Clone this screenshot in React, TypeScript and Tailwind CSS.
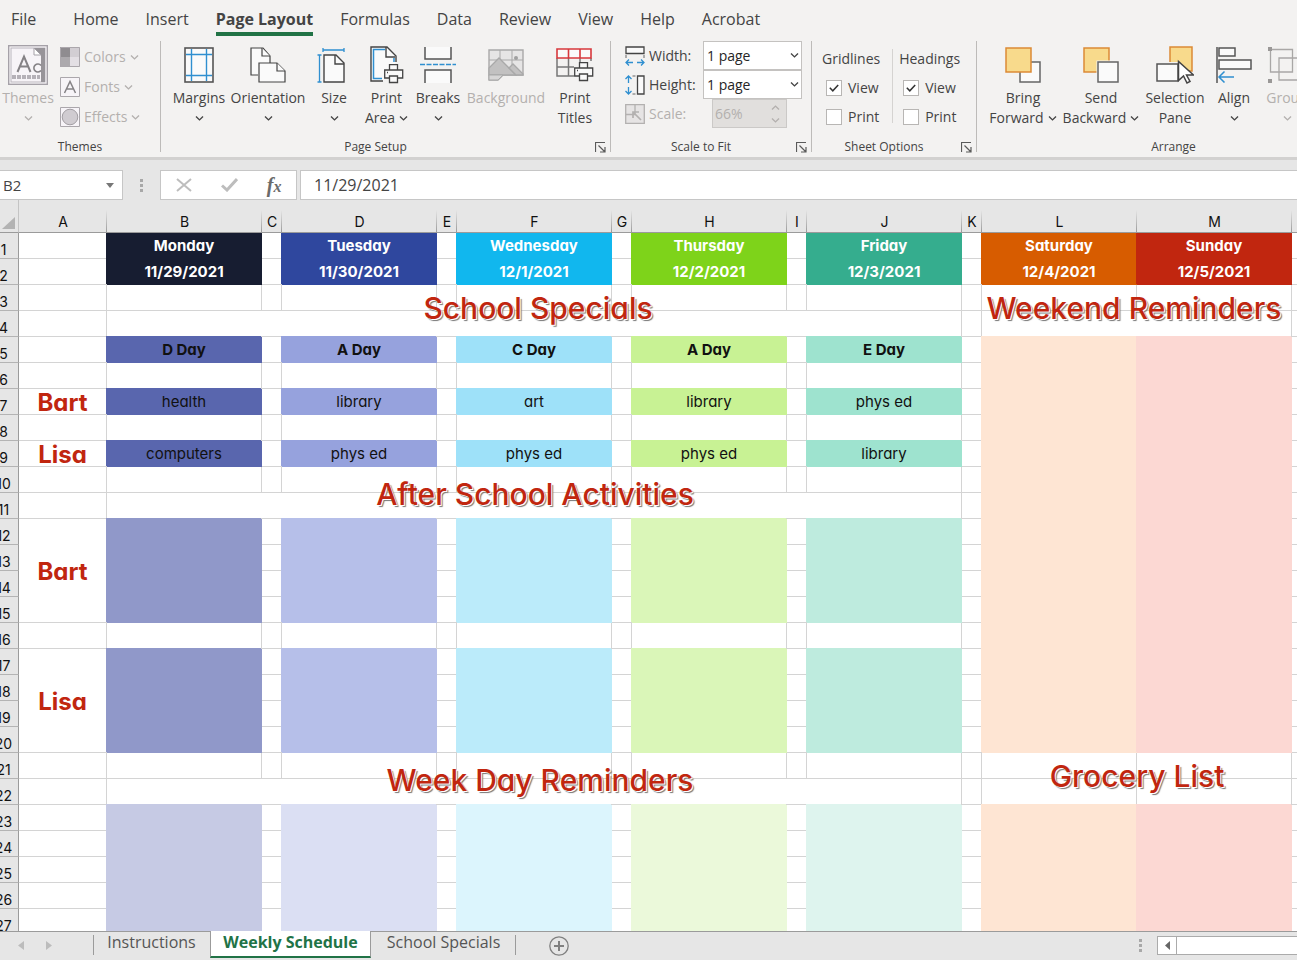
import { Fragment, type ReactNode } from "react";
import clsx from "clsx";

const Chevron = ({ up = false }: { up?: boolean }) => (
  <svg
    className={clsx("h-[5px] w-[9px] shrink-0", up && "rotate-180")}
    viewBox="0 0 9 5"
    fill="none"
    stroke="currentColor"
    strokeWidth="1.4"
  >
    <path d="M1 .6l3.5 3.3L8 .6" />
  </svg>
);

const Launcher = ({ label }: { label: string }) => (
  <button aria-label={label} className="flex w-5 justify-center">
    <svg className="h-[11px] w-[11px]" viewBox="0 0 11 11" fill="none" stroke="#5a5a5a">
      <path d="M.5 10V.5H10M3.5 3.5l6 6M10 5v5H5" strokeWidth="1.2" />
    </svg>
  </button>
);

/* ---------- ribbon icons ---------- */

const ThemesIcon = () => (
  <svg width="40" height="40" viewBox="0 0 40 40" fill="none">
    <rect x=".7" y=".7" width="38.6" height="38.6" fill="#fbf9fb" stroke="#a5a1a8" strokeWidth="1.4" />
    <rect x="3" y="3" width="34" height="34" fill="#f7f4f8" stroke="#bab6bd" />
    <path d="M33 3h4v34h-4z" fill="#979499" />
    <path d="M26 3h8v8z" fill="#979499" />
    <path d="M26 3v7h7z" fill="#fff" stroke="#a5a1a8" />
    <path d="M9.500 27L16 11.500 22.500 27M12 21.500h8.500" stroke="#858286" strokeWidth="2" />
    <path d="M33 20.500a4 4 0 1 0 0 5" stroke="#858286" strokeWidth="1.600" />
    <path d="M4 32h28" stroke="#b5b1b8" strokeWidth="4" strokeDasharray="4 1" />
  </svg>
);

const ColorsIcon = () => (
  <svg width="20" height="20" viewBox="0 0 20 20">
    <path fill="#8f8c90" d="M0 0h10v10H0z" />
    <path fill="#d2ced3" d="M10 0h10v10H10z" />
    <path fill="#aca9ad" d="M0 10h10v10H0z" />
    <path fill="#e3dfe4" d="M10 10h10v10H10z" />
    <path fill="none" stroke="#aba7ac" d="M.5.5h19v19H.5z" />
  </svg>
);

const FontsIcon = () => (
  <svg width="20" height="20" viewBox="0 0 20 20" fill="none">
    <path fill="#f7f4f8" stroke="#aba7ac" d="M.5.5h19v19H.5z" />
    <path d="M4.500 16L10 4.500 15.500 16M6.500 12h7" stroke="#858286" strokeWidth="1.500" />
  </svg>
);

const EffectsIcon = () => (
  <svg width="20" height="20" viewBox="0 0 20 20">
    <path fill="#f7f4f8" stroke="#aba7ac" d="M.5.5h19v19H.5z" />
    <circle cx="10" cy="10" r="7.800" fill="#d0ccd1" stroke="#a29ea3" />
  </svg>
);

const MarginsIcon = () => (
  <svg width="30" height="36" viewBox="0 0 30 36" fill="none">
    <rect x="1" y="1" width="28" height="34" fill="#fafafa" stroke="#555" strokeWidth="1.600" />
    <path d="M7.500 2v32M22.500 2v32M2 7.500h26M2 28.500h26" stroke="#2f8fd0" strokeWidth="1.400" />
  </svg>
);

const OrientationIcon = () => (
  <svg width="36" height="36" viewBox="0 0 36 36" fill="#fafafa" stroke="#444" strokeWidth="1.200">
    <path d="M8 28H1V1h12l7 8v7" />
    <path d="M12 1v8h8" />
    <path d="M9 16h18l8 8v11H9z" />
    <path d="M27 16v8h8" />
  </svg>
);

const SizeIcon = () => (
  <svg className="mr-1.5" width="28" height="36" viewBox="0 0 28 36" fill="none">
    <path d="M6 1v4M27 1v4M6 3h21M.5 8h4M.5 35h4M2.500 8v27" stroke="#2f8fd0" strokeWidth="1.300" />
    <path d="M7 8h12l8 8v19H7z" fill="#fafafa" stroke="#444" strokeWidth="1.400" />
    <path d="M18 8v9h9" stroke="#444" strokeWidth="1.400" />
  </svg>
);

const Printer = () => (
  <g fill="#fafafa" stroke="#444" strokeWidth="1.300">
    <path d="M5.500 6V.7h8V6" />
    <path d="M.7 6h18v8H.7z" />
    <path d="M5.500 12h8v6.500h-8z" />
    <path d="M3 8.500h1" />
  </g>
);

const PrintAreaIcon = () => (
  <svg width="34" height="38" viewBox="0 0 34 38" fill="none">
    <path d="M13 35H1V1h16l9 9v6" fill="#fafafa" stroke="#444" strokeWidth="1.400" />
    <path d="M16 1v10h9" stroke="#444" strokeWidth="1.400" />
    <path d="M12 32.500H3.500V3.500H15M24 12v4" stroke="#2f8fd0" strokeWidth="1.500" />
    <g transform="translate(14 18)">
      <Printer />
    </g>
  </svg>
);

const BreaksIcon = () => (
  <svg width="36" height="36" viewBox="0 0 36 36" fill="none">
    <path d="M5 0v12h26V0M5 36V23h26v13" fill="#fafafa" stroke="#555" strokeWidth="1.500" />
    <path d="M0 17.500h36" stroke="#2f8fd0" strokeWidth="1.500" strokeDasharray="5 1.500" />
  </svg>
);

const BackgroundIcon = () => (
  <svg width="36" height="32" viewBox="0 0 36 32" fill="none" stroke="#a9a9a9">
    <path d="M1 1h34v25H15l-5 5H1z" fill="#e6e5e5" strokeWidth="1.400" />
    <path d="M12 1v10M24 1v16M1 11h34" />
    <path d="M1 26v-7l10-10 17 17z" fill="#c2c1c1" strokeWidth="1.300" />
    <path d="M21 19l4-4 10 10v1h-7z" fill="#c2c1c1" strokeWidth="1.300" />
    <circle cx="28" cy="9" r="2" fill="#a0a0a0" stroke="none" />
    <path d="M1 31h9l5-5H1z" fill="#d7d6d6" />
  </svg>
);

const PrintTitlesIcon = () => (
  <svg width="38" height="34" viewBox="0 0 38 34" fill="none">
    <path d="M1 10v18h17M1 19h17M12.500 10v18M24 10v4M35 10v3" stroke="#777" strokeWidth="1.500" />
    <path d="M1 1h34v9H1zM12.500 1v9M24 1v9" fill="#fafafa" stroke="#d8383c" strokeWidth="1.600" />
    <g transform="translate(18 14)">
      <Printer />
    </g>
  </svg>
);

const WidthIcon = () => (
  <svg width="20" height="20" viewBox="0 0 20 20" fill="none">
    <path d="M1 1h18v6.500H1z" fill="#fafafa" stroke="#444" strokeWidth="1.300" />
    <path d="M1 9v3M19 9v3" stroke="#666" />
    <path d="M1 16.500h7M12 16.500h7M4 13.500l-3 3 3 3M16 13.500l3 3-3 3" stroke="#2f8fd0" strokeWidth="1.300" />
  </svg>
);

const HeightIcon = () => (
  <svg width="20" height="20" viewBox="0 0 20 20" fill="none">
    <path d="M12.500 1H19v18h-6.500z" fill="#fafafa" stroke="#444" strokeWidth="1.300" />
    <path d="M7.500 1h3M7.500 19h3" stroke="#666" />
    <path d="M3.500 1v7M3.500 12v7M.5 4l3-3 3 3M.5 16l3 3 3-3" stroke="#2f8fd0" strokeWidth="1.300" />
  </svg>
);

const ScaleIcon = () => (
  <svg width="20" height="20" viewBox="0 0 20 20" fill="none" stroke="#b3b1b0" strokeWidth="1.300">
    <path d="M.7.7h18.600v18.600H.7z" fill="#e6e4e4" />
    <path d="M.7 10.500H10V.7" />
    <path d="M16 16L8.500 8.500M8 14V8h6" strokeWidth="1.700" />
  </svg>
);

const ForwardIcon = () => (
  <svg width="36" height="36" viewBox="0 0 36 36" strokeWidth="1.500">
    <path d="M15 15h20v20H15z" fill="#fafafa" stroke="#666" />
    <path d="M1 1h25v24H1z" fill="#f8da8c" stroke="#dc8a36" />
  </svg>
);

const BackwardIcon = () => (
  <svg width="36" height="36" viewBox="0 0 36 36" strokeWidth="1.500">
    <path d="M1 1h25v24H1z" fill="#f8da8c" stroke="#dc8a36" />
    <path d="M13.500 13.500H36V36H13.500z" fill="#f3f2f1" />
    <path d="M15 15h20v20H15z" fill="#fafafa" stroke="#666" />
  </svg>
);

const SelectionIcon = () => (
  <svg width="38" height="38" viewBox="0 0 38 38" strokeWidth="1.500">
    <path d="M14 1h22v24H14z" fill="#f8da8c" stroke="#dc8a36" />
    <path d="M0 16h24v20H0z" fill="#f3f2f1" />
    <path d="M1 18h21v17H1z" fill="#fafafa" stroke="#555" />
    <path d="M22.500 15.500v19l5-4.500 3.500 7 3-1.500-3.500-6.500h7z" fill="#fff" stroke="#444" />
  </svg>
);

const AlignIcon = () => (
  <svg width="36" height="36" viewBox="0 0 36 36" fill="none" strokeWidth="1.500">
    <path d="M1 0v36" stroke="#555" />
    <path d="M3 1h16v8H3zM3 13h32v9H3z" fill="#fafafa" stroke="#555" />
    <path d="M3 30h15M8.500 24.500L3 30l5.500 5.500" stroke="#2f8fd0" />
  </svg>
);

const GroupIcon = () => (
  <svg width="38" height="36" viewBox="0 0 38 36" fill="none" stroke="#a9a7a6" strokeWidth="1.300">
    <path d="M2.500 4v21h22V2.500H4M11 11h25v22H11z" />
    <path d="M0 0h4v4H0zM0 32h4v4H0zM34 0h4v4h-4zM34 32h4v4h-4z" fill="#9a9897" stroke="none" />
  </svg>
);

/* ---------- ribbon pieces ---------- */

type BigButtonProps = {
  icon: ReactNode;
  lines: string[];
  width: string;
  menu?: boolean;
  disabled?: boolean;
};

const BigButton = ({ icon, lines, width, menu, disabled }: BigButtonProps) => (
  <button
    disabled={disabled}
    className={clsx(
      "flex shrink-0 flex-col items-center text-sm leading-5 whitespace-nowrap",
      width,
      disabled && "text-[#b3b0ae]"
    )}
  >
    <span className="flex h-[46px] items-center justify-center">{icon}</span>
    <span>{lines[0]}</span>
    <span className="flex h-5 items-center gap-1">
      {lines[1]}
      {menu && <Chevron />}
    </span>
  </button>
);

type GroupProps = { title: string; width: string; launcher?: boolean; children: ReactNode };

const RibbonGroup = ({ title, width, launcher, children }: GroupProps) => (
  <section
    aria-label={title}
    className={clsx("flex h-[111px] shrink-0 flex-col justify-between border-r border-[#bdbbb9]", width)}
  >
    <div className="flex">{children}</div>
    <div className="flex h-2.5 items-center text-xs">
      <span className="flex-1 text-center">{title}</span>
      {launcher && <Launcher label={`${title} settings`} />}
    </div>
  </section>
);

const MenuRow = ({ icon, label }: { icon: ReactNode; label: string }) => (
  <button disabled className="flex h-[30px] items-center gap-1 text-sm text-[#b3b0ae]">
    {icon}
    <span>{label}</span>
    <Chevron />
  </button>
);

const PageSelect = ({ icon, label }: { icon: ReactNode; label: string }) => (
  <label className="flex h-[29px] items-center">
    {icon}
    <span className="ml-1 w-[54px]">{label}:</span>
    <span className="grid h-full w-[99px] items-center">
      <select className="col-start-1 row-start-1 h-full w-full appearance-none border border-[#c4c2c0] bg-white pl-[3px] text-[#262626]">
        <option>1 page</option>
        <option>Automatic</option>
      </select>
      <span className="pointer-events-none col-start-1 row-start-1 mr-[3px] justify-self-end">
        <Chevron />
      </span>
    </span>
  </label>
);

const CheckOption = ({ label, checked }: { label: string; checked?: boolean }) => (
  <label className="flex h-[29px] items-center gap-1.5 pl-1">
    <span className="grid place-items-center">
      <input
        type="checkbox"
        defaultChecked={checked}
        className="peer col-start-1 row-start-1 h-4 w-4 appearance-none border border-[#b8b6b4] bg-white"
      />
      <svg
        className="pointer-events-none invisible col-start-1 row-start-1 h-2 w-2.5 peer-checked:visible"
        viewBox="0 0 10 8"
        fill="none"
        stroke="#333"
        strokeWidth="1.500"
      >
        <path d="M.8 3.800l3 3L9.200 1" />
      </svg>
    </span>
    {label}
  </label>
);

const CheckColumn = ({ title }: { title: string }) => (
  <fieldset className="flex flex-col">
    <legend className="h-8 pt-2 leading-5">{title}</legend>
    <CheckOption label="View" checked />
    <CheckOption label="Print" />
  </fieldset>
);

const ribbonTabs = ["Home", "Insert", "Page Layout", "Formulas", "Data", "Review", "View", "Help", "Acrobat"];

const Ribbon = () => (
  <header className="shrink-0 overflow-hidden border-b-3 border-[#d2d1d0] bg-[#f3f2f1] text-[#444]">
    <nav className="flex h-[41px] items-start gap-[27px] pt-1.5 pl-[11px] text-base whitespace-nowrap">
      <button className="mr-2.5 h-[26px]">File</button>
      {ribbonTabs.map((tab) => (
        <button
          key={tab}
          className={clsx(tab === "Page Layout" ? "h-[30px] border-b-4 border-[#217346] font-bold" : "h-[26px]")}
        >
          {tab}
        </button>
      ))}
    </nav>
    <div className="flex pb-[5px]">
      <RibbonGroup title="Themes" width="w-[161px]">
        <div className="flex pt-px">
          <BigButton icon={<ThemesIcon />} lines={["Themes"]} width="w-[56px]" menu disabled />
          <div className="ml-1 flex flex-col">
            <MenuRow icon={<ColorsIcon />} label="Colors" />
            <MenuRow icon={<FontsIcon />} label="Fonts" />
            <MenuRow icon={<EffectsIcon />} label="Effects" />
          </div>
        </div>
      </RibbonGroup>
      <RibbonGroup title="Page Setup" width="w-[450px]" launcher>
        <div className="flex pt-px pl-[7px]">
          <BigButton icon={<MarginsIcon />} lines={["Margins"]} width="w-[62px]" menu />
          <BigButton icon={<OrientationIcon />} lines={["Orientation"]} width="w-[76px]" menu />
          <BigButton icon={<SizeIcon />} lines={["Size"]} width="w-[56px]" menu />
          <BigButton icon={<PrintAreaIcon />} lines={["Print", "Area"]} width="w-[49px]" menu />
          <BigButton icon={<BreaksIcon />} lines={["Breaks"]} width="w-[54px]" menu />
          <BigButton icon={<BackgroundIcon />} lines={["Background"]} width="w-[82px]" disabled />
          <BigButton icon={<PrintTitlesIcon />} lines={["Print", "Titles"]} width="w-[56px]" />
        </div>
      </RibbonGroup>
      <RibbonGroup title="Scale to Fit" width="w-[201px]" launcher>
        <div className="ml-[14px] flex flex-col text-sm">
          <PageSelect icon={<WidthIcon />} label="Width" />
          <PageSelect icon={<HeightIcon />} label="Height" />
          <label className="flex h-[29px] items-center text-[#b3b0ae]">
            <ScaleIcon />
            <span className="ml-1 w-[63px]">Scale:</span>
            <span className="flex h-full w-[75px] items-center border border-[#cbc9c7] bg-[#e1dfdd] pr-1.5 pl-0.5">
              <input disabled defaultValue="66%" className="w-0 flex-1" />
              <span className="flex flex-col gap-2">
                <Chevron up />
                <Chevron />
              </span>
            </span>
          </label>
        </div>
      </RibbonGroup>
      <RibbonGroup title="Sheet Options" width="w-[165px]" launcher>
        <div className="flex pl-[10px] text-sm">
          <CheckColumn title="Gridlines" />
          <div className="mr-[6px] ml-[12px] mt-2 h-[74px] border-r border-[#d5d3d1]" />
          <CheckColumn title="Headings" />
        </div>
      </RibbonGroup>
      <RibbonGroup title="Arrange" width="w-[394px]">
        <div className="flex pt-px pl-[7px]">
          <BigButton icon={<ForwardIcon />} lines={["Bring", "Forward"]} width="w-[78px]" menu />
          <BigButton icon={<BackwardIcon />} lines={["Send", "Backward"]} width="w-[78px]" menu />
          <BigButton icon={<SelectionIcon />} lines={["Selection", "Pane"]} width="w-[70px]" />
          <BigButton icon={<AlignIcon />} lines={["Align"]} width="w-[48px]" menu />
          <BigButton icon={<GroupIcon />} lines={["Group"]} width="w-[58px]" menu disabled />
        </div>
      </RibbonGroup>
    </div>
  </header>
);

const Dots = () => (
  <span className="flex flex-col gap-0.5">
    <i className="h-[3px] w-[3px] bg-[#a8a8a8]" />
    <i className="h-[3px] w-[3px] bg-[#a8a8a8]" />
    <i className="h-[3px] w-[3px] bg-[#a8a8a8]" />
  </span>
);

const FormulaBar = () => (
  <div className="flex h-10 shrink-0 items-end text-base text-[#444]">
    <div className="flex h-[30px] w-[123px] items-center border border-l-0 border-[#c6c6c6] bg-white pr-2 pl-[3px]">
      <input aria-label="Name box" defaultValue="B2" className="w-0 flex-1 text-[15px]" />
      <svg width="8" height="5" viewBox="0 0 8 5" fill="#777">
        <path d="M0 0h8L4 5z" />
      </svg>
    </div>
    <div className="flex h-[30px] w-[37px] items-center justify-center">
      <Dots />
    </div>
    <div className="flex h-[30px] w-[137px] items-center justify-around border border-[#c6c6c6] bg-white">
      <button aria-label="Cancel">
        <svg width="16" height="14" viewBox="0 0 16 14" stroke="#bdbdbd" strokeWidth="2">
          <path d="M1 1l14 12M15 1L1 13" />
        </svg>
      </button>
      <button aria-label="Enter">
        <svg width="17" height="14" viewBox="0 0 17 14" fill="none" stroke="#bdbdbd" strokeWidth="3">
          <path d="M1 7.500l5 4.500L16 1" />
        </svg>
      </button>
      <button aria-label="Insert function" className="font-['Liberation_Serif',serif] text-xl font-bold text-[#6b6b6b] italic">
        f<span className="text-base">x</span>
      </button>
    </div>
    <input
      aria-label="Formula"
      defaultValue="11/29/2021"
      className="ml-[3px] h-[30px] min-w-0 flex-1 border border-r-0 border-[#c6c6c6] bg-white pl-[13px]"
    />
  </div>
);

/* ---------- worksheet ---------- */

type DayColumn = {
  col: string;
  day: string;
  date: string;
  cycle?: string;
  bart?: string;
  lisa?: string;
  head: string;
  special: string;
  activity: string;
  reminder: string;
};

const days: DayColumn[] = [
  {
    col: "B", day: "Monday", date: "11/29/2021", cycle: "D Day", bart: "health", lisa: "computers",
    head: "bg-[#171d31] shadow-[#171d31]",
    special: "bg-[#5966ae] shadow-[#5966ae]",
    activity: "bg-[#9098c9] shadow-[#9098c9]",
    reminder: "bg-[#c6cae4] shadow-[#c6cae4]",
  },
  {
    col: "D", day: "Tuesday", date: "11/30/2021", cycle: "A Day", bart: "library", lisa: "phys ed",
    head: "bg-[#2f479e] shadow-[#2f479e]",
    special: "bg-[#96a2dd] shadow-[#96a2dd]",
    activity: "bg-[#b6bfe9] shadow-[#b6bfe9]",
    reminder: "bg-[#dbdff3] shadow-[#dbdff3]",
  },
  {
    col: "F", day: "Wednesday", date: "12/1/2021", cycle: "C Day", bart: "art", lisa: "phys ed",
    head: "bg-[#11b7ee] shadow-[#11b7ee]",
    special: "bg-[#9ee1f9] shadow-[#9ee1f9]",
    activity: "bg-[#bbebfa] shadow-[#bbebfa]",
    reminder: "bg-[#dcf5fd] shadow-[#dcf5fd]",
  },
  {
    col: "H", day: "Thursday", date: "12/2/2021", cycle: "A Day", bart: "library", lisa: "phys ed",
    head: "bg-[#7ed31a] shadow-[#7ed31a]",
    special: "bg-[#c8f294] shadow-[#c8f294]",
    activity: "bg-[#daf6b8] shadow-[#daf6b8]",
    reminder: "bg-[#ebf9da] shadow-[#ebf9da]",
  },
  {
    col: "J", day: "Friday", date: "12/3/2021", cycle: "E Day", bart: "phys ed", lisa: "library",
    head: "bg-[#35ad8e] shadow-[#35ad8e]",
    special: "bg-[#9ee3cf] shadow-[#9ee3cf]",
    activity: "bg-[#beebde] shadow-[#beebde]",
    reminder: "bg-[#def4ee] shadow-[#def4ee]",
  },
  {
    col: "L", day: "Saturday", date: "12/4/2021",
    head: "bg-[#d75c00] shadow-[#d75c00]",
    special: "bg-[#fee5d3] shadow-[#fee5d3]",
    activity: "bg-[#fee5d3] shadow-[#fee5d3]",
    reminder: "bg-[#fee5d3] shadow-[#fee5d3]",
  },
  {
    col: "M", day: "Sunday", date: "12/5/2021",
    head: "bg-[#c1260f] shadow-[#c1260f]",
    special: "bg-[#fcd8d3] shadow-[#fcd8d3]",
    activity: "bg-[#fcd8d3] shadow-[#fcd8d3]",
    reminder: "bg-[#fcd8d3] shadow-[#fcd8d3]",
  },
];

const columns = "ABCDEFGHIJKLM".split("");
const rows = Array.from({ length: 27 }, (_, i) => i + 1);
const names: Record<number, { name: string; span: number }> = {
  7: { name: "Bart", span: 1 },
  9: { name: "Lisa", span: 1 },
  12: { name: "Bart", span: 4 },
  17: { name: "Lisa", span: 4 },
};

const fillFor = (d: DayColumn, row: number) => {
  const weekend = !d.cycle;
  if (row <= 2) return d.head;
  if (row >= 23) return d.reminder;
  if (weekend) return row >= 5 && row <= 20 ? d.activity : undefined;
  if (row === 5 || row === 7 || row === 9) return d.special;
  if ((row >= 12 && row <= 15) || (row >= 17 && row <= 20)) return d.activity;
  return undefined;
};

const textFor = (d: DayColumn, row: number) => {
  switch (row) {
    case 1: return d.day;
    case 2: return d.date;
    case 5: return d.cycle;
    case 7: return d.bart;
    case 9: return d.lisa;
    default: return undefined;
  }
};

const cell = "h-[26px] border-r border-b p-0 text-center leading-5 whitespace-nowrap";
const grid = "border-[#d4d4d4]";

const NameCell = ({ row }: { row: number }) => {
  if ((row > 12 && row <= 15) || (row > 17 && row <= 20)) return null;
  const entry = names[row];
  return (
    <td rowSpan={entry?.span} className={clsx(cell, grid)}>
      {entry && <div className="pt-[3px] text-2xl leading-5 font-bold text-[#c1260f]">{entry.name}</div>}
    </td>
  );
};

const SheetRow = ({ row }: { row: number }) => {
  const mergedWeek = row === 4 || row === 11 || row === 22;
  return (
    <tr>
      <th className="h-[26px] border-r border-b border-r-[#9b9b9b] border-b-[#b4b4b4] bg-[#e6e6e6] p-0 align-bottom text-sm leading-4 font-normal">
        {row}
      </th>
      <NameCell row={row} />
      {columns.slice(1).map((col) => {
        if (mergedWeek && col > "B" && col < "K") return null;
        if (mergedWeek && col === "B") return <td key={col} colSpan={9} className={clsx(cell, grid)} />;
        if (row === 4 && col === "L") return <td key={col} colSpan={2} className={clsx(cell, grid)} />;
        if (row === 4 && col === "M") return null;
        const d = days.find((x) => x.col === col);
        const fill = d && fillFor(d, row);
        if (!d || !fill) return <td key={col} className={clsx(cell, grid)} />;
        return (
          <td
            key={col}
            className={clsx(
              cell,
              "border-transparent",
              row === 1 ? "shadow-[-1px_0_0_#000]" : "shadow-[-1px_-1px_0_#000]",
              row <= 2 && "text-white",
              row <= 5 && "font-bold",
              fill
            )}
          >
            {textFor(d, row)}
          </td>
        );
      })}
      <td className="border-b border-[#d4d4d4] p-0" />
    </tr>
  );
};

const wordArt = [
  { text: "School Specials", place: "left-[538px] top-[90px]" },
  { text: "Weekend Reminders", place: "left-[1134px] top-[90px]" },
  { text: "After School Activities", place: "left-[535px] top-[276px]" },
  { text: "Week Day Reminders", place: "left-[540px] top-[562px]" },
  { text: "Grocery List", place: "left-[1137px] top-[558px]" },
];

const Sheet = () => (
  <main className="relative min-h-0 flex-1 overflow-hidden font-['Inter',sans-serif] text-[15px] text-[#111] [font-feature-settings:'cv11']">
    <table className="-ml-[11px] w-[calc(100%+11px)] table-fixed border-separate border-spacing-0 bg-white">
      <colgroup>
        <col className="w-[30px]" />
        <col className="w-[88px]" />
        {["B", "D", "F", "H", "J"].map((c) => (
          <Fragment key={c}>
            <col className="w-[155px]" />
            <col className="w-[20px]" />
          </Fragment>
        ))}
        <col className="w-[155px]" />
        <col className="w-[155px]" />
        <col />
      </colgroup>
      <thead>
        <tr className="bg-[#e6e6e6]">
          <th className="h-[33px] border-r border-b border-[#9b9b9b] border-r-[#c4c4c4] p-0 align-bottom">
            <svg className="mr-[3px] mb-[3px] ml-auto" width="13" height="12" viewBox="0 0 13 12" fill="#b3b3b3">
              <path d="M13 0v12H0z" />
            </svg>
          </th>
          {columns.map((c) => (
            <th
              key={c}
              className="border-b border-[#9b9b9b] bg-[linear-gradient(to_top,#9b9b9b,#e6e6e6)] bg-[length:1px_22px] bg-[position:right_bottom] bg-no-repeat p-0 align-bottom text-sm leading-5 font-normal"
            >
              {c}
            </th>
          ))}
          <th className="border-b border-[#9b9b9b] p-0" />
        </tr>
      </thead>
      <tbody>
        {rows.map((row) => (
          <SheetRow key={row} row={row} />
        ))}
      </tbody>
    </table>
    {wordArt.map(({ text, place }) => (
      <h2
        key={text}
        className={clsx(
          "absolute -translate-x-1/2 text-[30px] leading-9 font-medium whitespace-nowrap text-[#c1260f] [text-shadow:1px_1px_0_#fff,2px_2px_1px_#777]",
          place
        )}
      >
        {text}
      </h2>
    ))}
  </main>
);

const SheetTabs = () => (
  <footer className="flex h-[29px] shrink-0 items-start border-t border-[#9b9b9b] text-base leading-5 whitespace-nowrap text-[#555]">
    <button aria-label="Previous sheet" className="mt-[9px] ml-[18px]">
      <svg width="6" height="9" viewBox="0 0 6 9" fill="#bcbcbc">
        <path d="M6 0v9L0 4.500z" />
      </svg>
    </button>
    <button aria-label="Next sheet" className="mt-[9px] ml-[22px]">
      <svg width="6" height="9" viewBox="0 0 6 9" fill="#bcbcbc">
        <path d="M0 0v9l6-4.500z" />
      </svg>
    </button>
    <button className="ml-[41px] h-6 w-[117px] bg-[linear-gradient(#9b9b9b,#9b9b9b)] bg-[length:1px_20px] bg-[position:left_3px] bg-no-repeat pb-1">
      Instructions
    </button>
    <button className="-mt-px h-[27px] w-[161px] border-x border-b-2 border-x-[#9b9b9b] border-b-[#217346] bg-white pb-[3px] font-bold text-[#217346]">
      Weekly Schedule
    </button>
    <button className="h-6 w-[145px] bg-[linear-gradient(#9b9b9b,#9b9b9b)] bg-[length:1px_20px] bg-[position:right_3px] bg-no-repeat pb-1">
      School Specials
    </button>
    <button aria-label="New sheet" className="mt-1 ml-[33px]">
      <svg width="20" height="20" viewBox="0 0 20 20" fill="none" stroke="#808080" strokeWidth="1.300">
        <circle cx="10" cy="10" r="9.200" />
        <path d="M5 10h10M10 5v10" strokeWidth="2" />
      </svg>
    </button>
    <div className="mt-[7px] mr-[15px] ml-auto">
      <Dots />
    </div>
    <div className="mt-1 flex h-[19px] w-[140px] border border-r-0 border-[#ababab] bg-white">
      <button aria-label="Scroll left" className="flex w-[19px] items-center justify-center border-r border-[#ababab]">
        <svg width="5" height="9" viewBox="0 0 5 9" fill="#666">
          <path d="M5 0v9L0 4.500z" />
        </svg>
      </button>
    </div>
  </footer>
);

export default function App() {
  return (
    <div className="flex h-screen flex-col overflow-hidden bg-[#e6e6e6] font-['Open_Sans',sans-serif]">
      <Ribbon />
      <FormulaBar />
      <Sheet />
      <SheetTabs />
    </div>
  );
}
